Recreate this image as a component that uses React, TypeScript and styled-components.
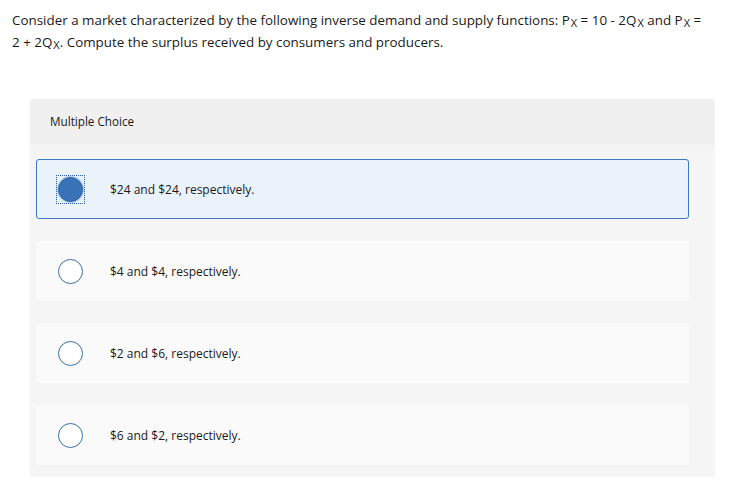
import React from 'react';
import styled, { createGlobalStyle } from 'styled-components';

const GlobalStyle = createGlobalStyle`
  html, body {
    margin: 0;
    padding: 0;
    background: #ffffff;
  }
  body {
    font-family: 'Open Sans', 'Noto Sans', sans-serif;
    color: #1a1a1a;
  }
`;

const Page = styled.div`
  width: 745px;
  height: 485px;
  padding: 9px 0 0 0;
  box-sizing: border-box;
  overflow: hidden;
`;

const Question = styled.p`
  margin: 0 0 0 12px;
  width: 725px;
  font-size: 13.4px;
  line-height: 22px;
  color: #1a1a1a;
  white-space: nowrap;
`;

const Sub = styled.span`
  font-size: 11px;
  vertical-align: -2px;
  line-height: 0;
  margin-left: 1px;
`;

const Panel = styled.div`
  margin: 46px 0 0 30px;
  width: 685px;
  background: #f5f5f5;
  border-radius: 4px 4px 0 0;
  padding-bottom: 12px;
`;

const Header = styled.div`
  height: 46px;
  background: #f0f0f0;
  border-radius: 4px 4px 0 0;
  display: flex;
  align-items: center;
  padding: 0 0 3px 20px;
  box-sizing: border-box;
  font-size: 11.7px;
  color: #1a1a1a;
`;

const Options = styled.div`
  display: flex;
  flex-direction: column;
  gap: 22px;
  padding: 14px 26px 0 6px;
`;

const Option = styled.label<{ $selected?: boolean }>`
  display: flex;
  align-items: center;
  height: 60px;
  box-sizing: border-box;
  border-radius: 3px;
  padding-left: 21px;
  background: ${p => (p.$selected ? '#eaf2fb' : '#fafafa')};
  border: 1px solid ${p => (p.$selected ? '#3d78c0' : 'transparent')};
  font-size: 12px;
  color: #1a1a1a;
`;

const RadioFocus = styled.span<{ $focused?: boolean }>`
  display: flex;
  flex: none;
  padding: 1px;
  margin: -1px;
  outline: ${p => (p.$focused ? '1px dotted #2a5aa0' : 'none')};
`;

const Radio = styled.span<{ $checked?: boolean }>`
  width: 25px;
  height: 25px;
  box-sizing: border-box;
  border-radius: 50%;
  flex: none;
  background: ${p => (p.$checked ? '#3a72b6' : '#ffffff')};
  border: ${p => (p.$checked ? '1.5px solid #2f64a6' : '1.5px solid #3b6fa8')};
  box-shadow: ${p => (p.$checked ? '0 0 1px 1px #a9c9ee' : 'none')};
`;

const OptionText = styled.span`
  margin-left: 27px;
`;

const choices = [
  '$24 and $24, respectively.',
  '$4 and $4, respectively.',
  '$2 and $6, respectively.',
  '$6 and $2, respectively.',
];

export default function App() {
  return (
    <>
      <GlobalStyle />
      <Page>
        <Question>
          Consider a market characterized by the following inverse demand and supply functions: P<Sub>X</Sub> = 10 - 2Q<Sub>X</Sub> and P<Sub>X</Sub> =
          <br />
          2 + 2Q<Sub>X</Sub>. Compute the surplus received by consumers and producers.
        </Question>
        <Panel>
          <Header>Multiple Choice</Header>
          <Options>
            {choices.map((c, i) => (
              <Option key={c} $selected={i === 0}>
                <RadioFocus $focused={i === 0}>
                  <Radio $checked={i === 0} />
                </RadioFocus>
                <OptionText>{c}</OptionText>
              </Option>
            ))}
          </Options>
        </Panel>
      </Page>
    </>
  );
}
